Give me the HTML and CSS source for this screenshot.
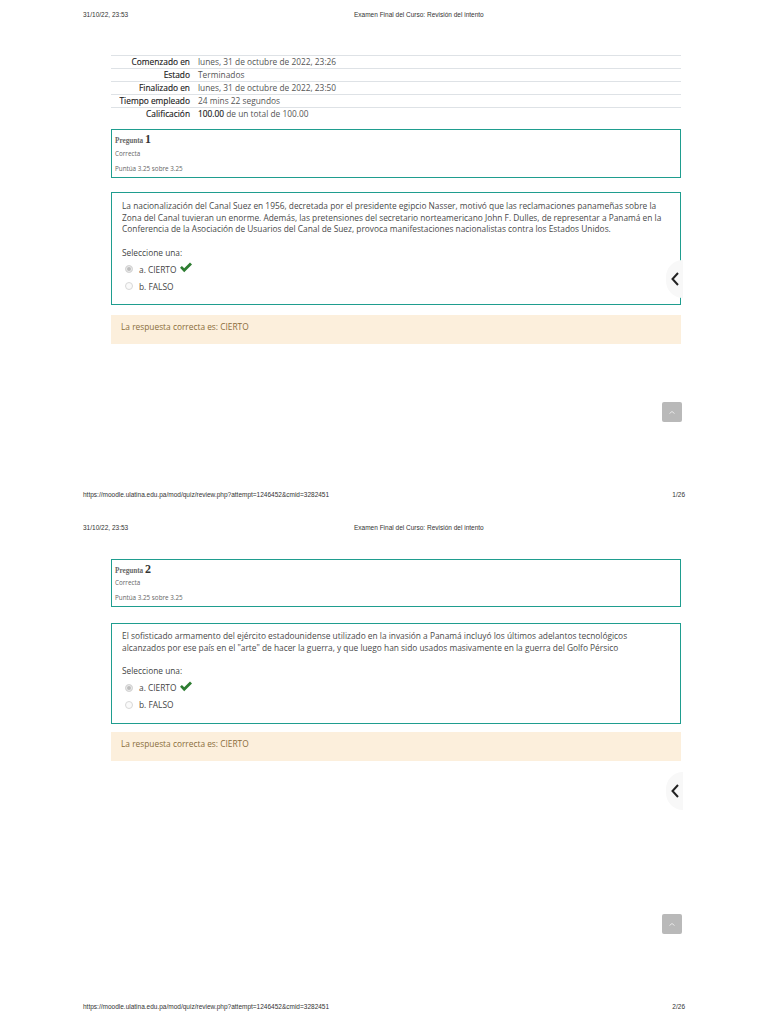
FILE: index.html
```html
<!DOCTYPE html>
<html lang="es">
<head>
  <meta charset="UTF-8">
  <title>Examen Final del Curso: Revisión del intento</title>
  <link rel="stylesheet" href="styles.css">
</head>
<body>
  <section class="sheet">
    <div class="print-head">
      <span class="print-date">31/10/22, 23:53</span>
      <span class="print-title">Examen Final del Curso: Revisión del intento</span>
    </div>
    <div class="content first">
      <table class="summary">
        <tr><th>Comenzado en</th><td>lunes, 31 de octubre de 2022, 23:26</td></tr>
        <tr><th>Estado</th><td>Terminados</td></tr>
        <tr><th>Finalizado en</th><td>lunes, 31 de octubre de 2022, 23:50</td></tr>
        <tr><th>Tiempo empleado</th><td>24 mins 22 segundos</td></tr>
        <tr><th>Calificación</th><td><b>100.00</b> de un total de 100.00</td></tr>
      </table>
      <div class="info">
        <div class="qno">Pregunta <b>1</b></div>
        <div class="state">Correcta</div>
        <div class="grade">Puntúa 3.25 sobre 3.25</div>
      </div>
      <div class="question">
        <p class="qtext">La nacionalización del Canal Suez en 1956, decretada por el presidente egipcio Nasser, motivó que las reclamaciones panameñas sobre la Zona del Canal tuvieran un enorme. Además, las pretensiones del secretario norteamericano John F. Dulles, de representar a Panamá en la Conferencia de la Asociación de Usuarios del Canal de Suez, provoca manifestaciones nacionalistas contra los Estados Unidos.</p>
        <div class="prompt">Seleccione una:</div>
        <div class="option"><span class="radio checked"></span>a. CIERTO
          <svg class="tick" viewBox="0 0 14 11"><path d="M1 5.8 L2.9 3.9 L5.2 6.2 L11 .6 L13 2.6 L5.2 10.2 Z"/></svg>
        </div>
        <div class="option"><span class="radio"></span>b. FALSO</div>
      </div>
      <div class="feedback">La respuesta correcta es: CIERTO</div>
    </div>
    <div class="side-arrow">
      <svg viewBox="0 0 10 16"><path d="M8 2 L2.5 8 L8 14"/></svg>
    </div>
    <div class="to-top"><svg viewBox="0 0 8 5"><path d="M1.5 3.5 L4 1.5 L6.5 3.5"/></svg></div>
    <div class="print-foot">
      <span>https://moodle.ulatina.edu.pa/mod/quiz/review.php?attempt=1246452&amp;cmid=3282451</span>
      <span>1/26</span>
    </div>
  </section>

  <section class="sheet">
    <div class="print-head">
      <span class="print-date">31/10/22, 23:53</span>
      <span class="print-title">Examen Final del Curso: Revisión del intento</span>
    </div>
    <div class="content second">
      <div class="info">
        <div class="qno">Pregunta <b>2</b></div>
        <div class="state">Correcta</div>
        <div class="grade">Puntúa 3.25 sobre 3.25</div>
      </div>
      <div class="question">
        <p class="qtext">El sofisticado armamento del ejército estadounidense utilizado en la invasión a Panamá incluyó los últimos adelantos tecnológicos alcanzados por ese país en el "arte" de hacer la guerra, y que luego han sido usados masivamente en la guerra del Golfo Pérsico</p>
        <div class="prompt">Seleccione una:</div>
        <div class="option"><span class="radio checked"></span>a. CIERTO
          <svg class="tick" viewBox="0 0 14 11"><path d="M1 5.8 L2.9 3.9 L5.2 6.2 L11 .6 L13 2.6 L5.2 10.2 Z"/></svg>
        </div>
        <div class="option"><span class="radio"></span>b. FALSO</div>
      </div>
      <div class="feedback">La respuesta correcta es: CIERTO</div>
    </div>
    <div class="side-arrow">
      <svg viewBox="0 0 10 16"><path d="M8 2 L2.5 8 L8 14"/></svg>
    </div>
    <div class="to-top"><svg viewBox="0 0 8 5"><path d="M1.5 3.5 L4 1.5 L6.5 3.5"/></svg></div>
    <div class="print-foot">
      <span>https://moodle.ulatina.edu.pa/mod/quiz/review.php?attempt=1246452&amp;cmid=3282451</span>
      <span>2/26</span>
    </div>
  </section>
</body>
</html>
```

FILE: styles.css
```css
body {
    margin: 0;
    background: #fff;
    font-family: "Open Sans", sans-serif;
    color: #444;
}
.sheet {
    position: relative;
    height: 512px;
    display: flex;
    flex-direction: column;
    overflow: hidden;
}
.print-head,
.print-foot {
    display: flex;
    font-family: "Liberation Sans", sans-serif;
    font-size: 6.5px;
    line-height: 8px;
    color: #333;
    padding: 0 83px;
}
.print-head {
    margin-top: 11px;
}
.sheet + .sheet .print-head {
    margin-top: 12px;
}
.print-date {
    width: 271px;
}
.print-foot {
    justify-content: space-between;
    margin-top: auto;
    margin-bottom: 13px;
}
.content {
    margin: 0 87px 0 111px;
}
.content.first {
    margin-top: 36px;
}
.content.second {
    margin-top: 27px;
}
.summary {
    width: 100%;
    border-collapse: collapse;
    font-size: 8.35px;
    margin-bottom: 9px;
}
.summary th,
.summary td {
    height: 12px;
    padding: 0;
    border-top: 1px solid #dee2e6;
    line-height: 12px;
    font-weight: 400;
}
.summary th {
    width: 79px;
    text-align: right;
    color: #222;
    -webkit-text-stroke: 0.15px #222;
}
.summary td {
    padding-left: 8px;
    color: #555;
}
.summary b {
    font-weight: 400;
    color: #222;
    -webkit-text-stroke: 0.15px #222;
}
.info {
    height: 44px;
    border: 1.5px solid #1f9d8f;
    padding: 3px 3px 0;
    font-size: 6.3px;
    color: #666;
    margin-bottom: 14px;
}
.second .info {
    height: 43px;
    margin-bottom: 16px;
}
.qno {
    height: 13px;
    line-height: 13px;
    font-family: "Liberation Serif", serif;
    font-weight: 700;
    font-size: 7.2px;
    color: #666;
}
.qno b {
    font-size: 12px;
    color: #333;
}
.state {
    line-height: 14px;
}
.first .state {
    margin-top: 1px;
}
.grade {
    line-height: 15px;
}
.question {
    border: 1.5px solid #1f9d8f;
    padding: 7px 10px 9px;
    font-size: 8.35px;
    margin-bottom: 10px;
}
.second .question {
    padding: 6px 10px 10px;
    margin-bottom: 8px;
}
.qtext {
    margin: 0 0 12px;
    line-height: 11.5px;
    color: #4a4a4a;
}
.prompt {
    line-height: 12px;
    margin-bottom: 2px;
}
.option {
    display: flex;
    align-items: center;
    height: 17px;
    padding-left: 3px;
}
.radio {
    box-sizing: border-box;
    width: 8px;
    height: 8px;
    border-radius: 50%;
    border: 1px solid #d8d8d8;
    background: #fafafa;
    margin-right: 6px;
}
.radio.checked {
    background: #bdbdbd;
    box-shadow: inset 0 0 0 1px #eee;
}
.tick {
    width: 14px;
    height: 11px;
    margin: -3px 0 0 3px;
    fill: #2e7d32;
}
.feedback {
    height: 29px;
    line-height: 24px;
    background: #fcefdc;
    color: #8a6d3b;
    font-size: 8.35px;
    padding-left: 10px;
}
.side-arrow {
    position: absolute;
    top: 260px;
    right: 85px;
    width: 17px;
    height: 38px;
    background: #f8f8f8;
    border-radius: 17px 0 0 17px;
    display: flex;
    align-items: center;
    justify-content: center;
}
.side-arrow svg {
    width: 10px;
    height: 16px;
    fill: none;
    stroke: #222;
    stroke-width: 2;
}
.to-top {
    position: absolute;
    top: 402px;
    left: 662px;
    width: 20px;
    height: 20px;
    border-radius: 2px;
    background: #b9b9b9;
    display: flex;
    align-items: center;
    justify-content: center;
}
.to-top svg {
    width: 8px;
    height: 5px;
    fill: none;
    stroke: #e8e8e8;
    stroke-width: 1;
}
```
